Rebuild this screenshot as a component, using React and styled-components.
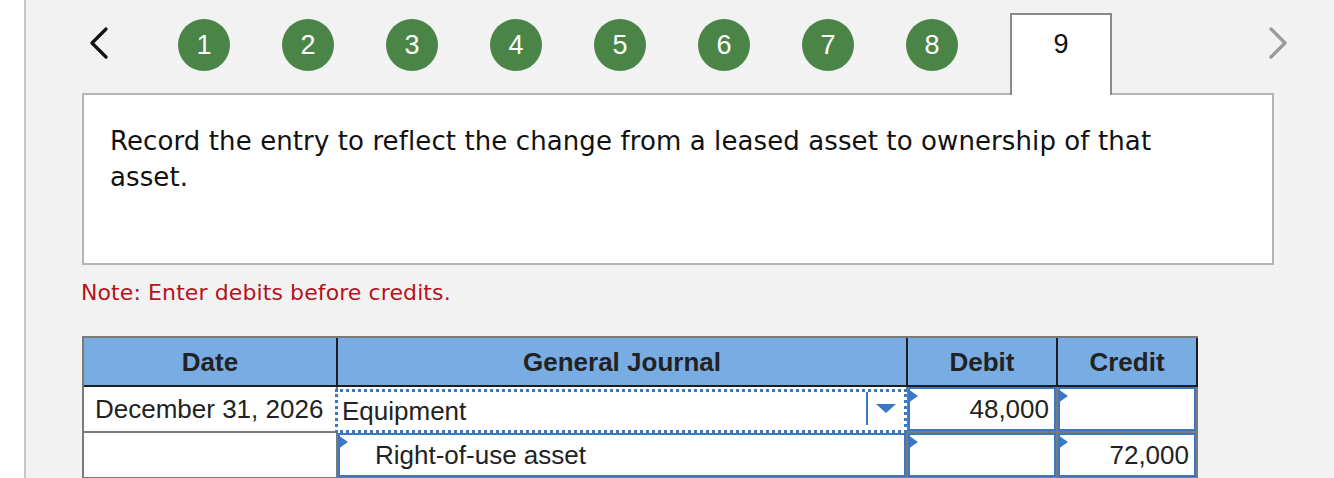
import React from 'react';
import styled, { createGlobalStyle } from 'styled-components';

const GlobalStyle = createGlobalStyle`
  html, body {
    margin: 0;
    padding: 0;
    overflow: hidden;
  }
  body {
    font-family: "Liberation Sans", Arial, sans-serif;
    color: #222;
  }
`;

const Page = styled.div`
  display: flex;
  height: 100vh;
  background: #fff;
`;

const Gutter = styled.div`
  width: 24px;
  flex-shrink: 0;
`;

const Main = styled.div`
  flex: 1;
  background: #f2f2f2;
  border-left: 2px solid #c8c8c8;
  overflow: hidden;
`;

const Nav = styled.div`
  display: flex;
  align-items: flex-start;
  height: 93px;
  padding-left: 63px;
`;

const Arrow = styled.svg`
  width: 20px;
  height: 32px;
  margin-top: 27px;
  margin-left: ${(p) => p.$offset || 0}px;
  flex-shrink: 0;
`;

const Steps = styled.div`
  display: flex;
  gap: 52px;
  margin-left: 69px;
`;

const Step = styled.div`
  width: 52px;
  height: 52px;
  margin-top: 19px;
  border-radius: 50%;
  background: #4a8547;
  color: #fff;
  font-size: 27px;
  display: flex;
  align-items: center;
  justify-content: center;
`;

const Tab = styled.div`
  position: relative;
  z-index: 1;
  box-sizing: border-box;
  width: 102px;
  height: 82px;
  margin-top: 13px;
  margin-left: 52px;
  padding-top: 14px;
  background: #fff;
  border: 2px solid #8a8a8a;
  border-bottom: none;
  font-size: 27px;
  color: #111;
  display: flex;
  justify-content: center;
`;

const QuestionBox = styled.div`
  box-sizing: border-box;
  width: 1192px;
  height: 172px;
  margin-left: 56px;
  padding: 28px 80px 0 26px;
  background: #fff;
  border: 2px solid #b5b5b5;
  font-family: "DejaVu Sans", Verdana, sans-serif;
  font-size: 26px;
  line-height: 36px;
  letter-spacing: 0.1px;
  color: #111;
`;

const Note = styled.div`
  margin: 13px 0 0 55px;
  font-family: "DejaVu Sans", Verdana, sans-serif;
  font-size: 22px;
  line-height: 30px;
  letter-spacing: 0.1px;
  color: #b3131c;
`;

const Journal = styled.div`
  display: grid;
  grid-template-columns: 254px 570px 150px 140px;
  grid-template-rows: 49px 46px 46px;
  width: max-content;
  margin: 28px 0 0 56px;
  border-left: 2px solid #7a7a7a;
  border-top: 2px solid #7a7a7a;
  font-size: 26px;
`;

const HeadCell = styled.div`
  box-sizing: border-box;
  background: #79ace2;
  border-right: 2px solid #1e1e1e;
  border-bottom: 2px solid #1e1e1e;
  padding-top: 2px;
  font-weight: bold;
  color: #222;
  display: flex;
  align-items: center;
  justify-content: center;
`;

const Cell = styled.div`
  box-sizing: border-box;
  background: #fff;
  border-right: 2px solid #7a7a7a;
  border-bottom: 2px solid #7a7a7a;
  display: flex;
  align-items: center;
  padding-left: ${(p) => p.$pad || 0}px;
  position: relative;
`;

const Field = styled.div`
  position: relative;
  box-sizing: border-box;
  align-self: stretch;
  flex: 1;
  background: #fff;
  border: 2px solid #3b78c3;
  display: flex;
  align-items: center;
  justify-content: ${(p) => (p.$amount ? 'flex-end' : 'flex-start')};
  padding: ${(p) => (p.$amount ? '0 5px 0 0' : `0 0 0 ${p.$indent || 0}px`)};
  color: #222;

  &::before {
    content: '';
    position: absolute;
    left: -2px;
    top: 0;
    border-left: 10px solid #3b78c3;
    border-top: 7px solid transparent;
    border-bottom: 7px solid transparent;
  }
`;

const Select = styled.div`
  position: relative;
  z-index: 1;
  box-sizing: border-box;
  align-self: stretch;
  flex: 1;
  margin: 2px -1px -2px -3px;
  background: #fff;
  border: 3px dotted #3b78c3;
  display: flex;
  align-items: stretch;
`;

const SelectText = styled.div`
  flex: 1;
  display: flex;
  align-items: center;
  padding-left: 4px;
  color: #222;
`;

const Caret = styled.div`
  width: 36px;
  margin-bottom: 5px;
  border-left: 2px solid #3b78c3;
  display: flex;
  align-items: center;
  justify-content: center;

  &::after {
    content: '';
    border-left: 10px solid transparent;
    border-right: 10px solid transparent;
    border-top: 9px solid #3b78c3;
  }
`;

export default function App() {
  const steps = [1, 2, 3, 4, 5, 6, 7, 8];

  return (
    <>
      <GlobalStyle />
      <Page>
        <Gutter />
        <Main>
          <Nav>
            <Arrow viewBox="0 0 20 32">
              <polyline points="17,2 3,16 17,30" fill="none" stroke="#111" strokeWidth="3.2" strokeLinecap="round" strokeLinejoin="round" />
            </Arrow>
            <Steps>
              {steps.map((n) => (
                <Step key={n}>{n}</Step>
              ))}
            </Steps>
            <Tab>9</Tab>
            <Arrow viewBox="0 0 20 32" $offset={156}>
              <polyline points="3,2 17,16 3,30" fill="none" stroke="#999" strokeWidth="3.2" strokeLinecap="round" strokeLinejoin="round" />
            </Arrow>
          </Nav>

          <QuestionBox>
            Record the entry to reflect the change from a leased asset to ownership of that asset.
          </QuestionBox>

          <Note>Note: Enter debits before credits.</Note>

          <Journal>
            <HeadCell>Date</HeadCell>
            <HeadCell>General Journal</HeadCell>
            <HeadCell>Debit</HeadCell>
            <HeadCell>Credit</HeadCell>

            <Cell $pad={11}>December 31, 2026</Cell>
            <Cell>
              <Select>
                <SelectText>Equipment</SelectText>
                <Caret />
              </Select>
            </Cell>
            <Cell>
              <Field $amount>48,000</Field>
            </Cell>
            <Cell>
              <Field $amount />
            </Cell>

            <Cell />
            <Cell>
              <Field $indent={35}>Right-of-use asset</Field>
            </Cell>
            <Cell>
              <Field $amount />
            </Cell>
            <Cell>
              <Field $amount>72,000</Field>
            </Cell>
          </Journal>
        </Main>
      </Page>
    </>
  );
}
